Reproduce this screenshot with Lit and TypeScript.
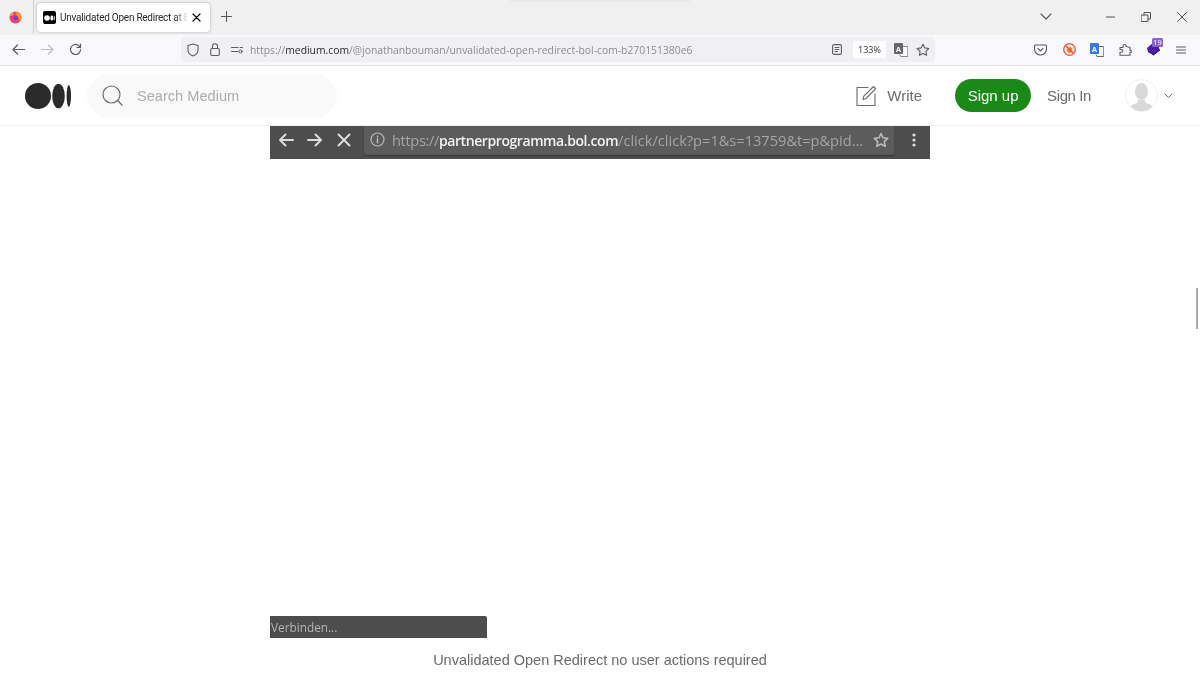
import { LitElement, html, css, svg } from "lit";
import { customElement } from "lit/decorators.js";

const ic = (w: number, h: number, vb: string, body: unknown, cls = "") =>
  html`<svg class="ic ${cls}" width=${w} height=${h} viewBox=${vb} fill="none" stroke="currentColor" stroke-linecap="round" stroke-linejoin="round">${body}</svg>`;

@customElement("app-root")
export class AppRoot extends LitElement {
  static styles = css`
    :host { display: block; width: 1200px; height: 675px; overflow: hidden; position: relative; background: #fff; font-family: "Open Sans", "Noto Sans", sans-serif; filter: blur(.35px); }
    * { box-sizing: border-box; }
    .ic { display: block; flex: none; }
    .tabs { height: 35px; background: #f0f0f0; display: flex; align-items: flex-start; position: relative; }
    .shade { position: absolute; left: 510px; top: 0; width: 180px; height: 3px; background: linear-gradient(#e6e6e6, #f0f0f0); border-radius: 0 0 8px 8px; }
    .fx { width: 34px; height: 34px; padding: 11px 0 0 9px; border-right: 1px solid #d2d2d4; flex: none; }
    .tab { margin: 3px 0 0 3px; width: 173px; height: 29px; background: #fff; border-radius: 4px; box-shadow: 0 0 3px rgba(0,0,0,.28); display: flex; align-items: center; padding: 0 9px 0 6px; gap: 4px; }
    .fav { width: 13px; height: 13px; background: #000; border-radius: 2px; display: flex; align-items: center; justify-content: center; flex: none; }
    .tabtext { font-family: "Roboto", sans-serif; font-size: 10px; letter-spacing: -.25px; color: #2a2a2e; white-space: nowrap; flex: 1; min-width: 0; -webkit-mask-image: linear-gradient(90deg,#000 90%,transparent 100%); mask-image: linear-gradient(90deg,#000 90%,transparent 100%); }
    .plus { margin: 11px 0 0 11px; color: #55555a; }
    .tabs-right { margin-left: auto; display: flex; align-items: center; height: 33px; color: #55555a; }
    .down { margin-right: 54px; }
    .win { margin-right: 26px; }
    .win.last { margin-right: 13px; }
    .nav { height: 31px; background: #f9f9fb; border-bottom: 1px solid #dedee0; display: flex; align-items: center; padding-bottom: 1px; position: relative; color: #5b5b60; }
    .back { margin-left: 12px; }
    .fwd { margin-left: 16px; color: #bdbdc2; }
    .reload { margin-left: 15px; }
    .url { width: 754px; height: 25px; background: #f0f0f4; border-radius: 4px; display: flex; align-items: center; padding-left: 6px; margin-left: 99px; }
    .lock { margin-left: 11px; }
    .tune { margin-left: 11px; }
    .urltext { font-size: 10.35px; color: #8b8b90; margin-left: 7px; white-space: nowrap; flex: 1; }
    .urltext b { font-weight: 400; color: #2a2a2e; }
    .urlr { display: flex; align-items: center; margin-right: 5px; }
    .zoom { width: 33px; height: 17px; background: #fff; border-radius: 3px; font-size: 9px; color: #333; display: flex; align-items: center; justify-content: center; margin: 0 8px 0 11px; }
    .star { margin-left: 8px; }
    .ext { margin-left: auto; display: flex; align-items: center; padding-right: 14px; }
    .e2 { margin-left: 16px; }
    .e3 { margin-left: 14px; }
    .e4 { margin-left: 15px; }
    .e5 { margin-left: 14px; margin-top: -5px; }
    .e6 { margin-left: 13px; }
    .mh { height: 60px; border-bottom: 1px solid #f2f2f2; display: flex; align-items: center; padding: 0 25px; }
    .search { margin-left: 16px; width: 250px; height: 42px; background: #f9f9f9; border-radius: 21px; display: flex; align-items: center; padding-left: 15px; color: #6b6b6b; }
    .search span { margin-left: 14px; font-family: "Liberation Sans", sans-serif; font-size: 14.6px; color: #adadad; }
    .hr { margin-left: auto; display: flex; align-items: center; color: #6b6b6b; font-family: "Liberation Sans", sans-serif; font-size: 15px; }
    .write { margin-left: 10px; }
    .signup { margin-left: 33px; width: 76px; height: 33px; background: #1a8917; color: #fff; border-radius: 17px; display: flex; align-items: center; justify-content: center; }
    .signin { margin-left: 16px; letter-spacing: -.4px; }
    .avatar { margin-left: 34px; width: 33px; height: 33px; border-radius: 50%; overflow: hidden; background: #fff; border: 1px solid #eee; }
    .chev { margin-left: 6px; margin-right: 2px; }
    .content { height: 549px; display: flex; flex-direction: column; align-items: center; }
    .figure { width: 660px; height: 512px; display: flex; flex-direction: column; justify-content: space-between; }
    .shot { height: 33px; background: #4d4d4d; display: flex; align-items: center; padding-bottom: 6px; color: #dcdcdc; }
    .shot .a1 { margin-left: 8px; }
    .shot .a2 { margin-left: 13px; }
    .shot .a3 { margin-left: 14px; }
    .bar { margin-left: 13px; width: 530px; height: 29px; align-self: flex-start; background: #5c5c5c; border-radius: 0 0 3px 3px; display: flex; align-items: center; padding: 0 0 2px 6px; box-shadow: 0 1px 1px rgba(0,0,0,.35); color: #b9b9b9; }
    .shoturl { font-family: "Open Sans", sans-serif; font-size: 14.6px; color: #a5a5a5; margin-left: 7px; white-space: nowrap; flex: 1; }
    .shoturl i { font-style: normal; letter-spacing: -.35px; }
    .shoturl b { font-size: 14px; font-weight: 600; letter-spacing: -.42px; color: #f2f2f2; }
    .gap5 { width: 5px; }
    .dots { margin-left: 18px; color: #e0e0e0; }
    .status { width: 217px; height: 22px; background: #4d4d4d; border-radius: 0 2px 0 0; color: #b5b5b5; font-family: "Open Sans", sans-serif; font-size: 11.8px; line-height: 22px; padding-left: 1px; white-space: nowrap; overflow: hidden; }
    .caption { margin-top: 11px; font-family: "Liberation Sans", sans-serif; font-size: 14.5px; color: #6b6b6b; line-height: 22px; }
    .thumb { position: absolute; left: 1196px; top: 288px; width: 2px; height: 41px; background: #a9a9a9; }
  `;

  render() {
    return html`
      <div class="tabs">
        <div class="shade"></div>
        <div class="fx">
          <svg class="ic" width="13" height="13" viewBox="0 0 13 13"><circle cx="6.5" cy="6.5" r="6" fill="#e6407a"/><path d="M6.5 .5a6 6 0 0 1 6 6c0 2-1 3.6-2.4 4.8C11 9 10 6.5 8 5.5 7.5 4 7 2 6.5.5z" fill="#f59a23"/><circle cx="6.8" cy="7" r="2.2" fill="#8a3fb0"/><path d="M1 5c1-2 2-3 4-4-1 1-1 2-.6 3C3 4.500 2 5 1 5z" fill="#f9b233"/></svg>
        </div>
        <div class="tab">
          <div class="fav"><svg class="ic" width="11" height="6" viewBox="0 0 11 6"><circle cx="3" cy="3" r="2.800" fill="#fff"/><ellipse cx="7.800" cy="3" rx="1.400" ry="2.700" fill="#fff"/><ellipse cx="10.200" cy="3" rx=".5" ry="2.500" fill="#fff"/></svg></div>
          <span class="tabtext">Unvalidated Open Redirect at B</span>
          ${ic(9, 9, "0 0 9 9", svg`<path d="M1 1l7 7M8 1l-7 7" stroke-width="1.200"/>`)}
        </div>
        ${ic(11, 11, "0 0 11 11", svg`<path d="M5.500 .5v10M.5 5.500h10" stroke-width="1.100"/>`, "plus")}
        <div class="tabs-right">
          ${ic(12, 7, "0 0 12 7", svg`<path d="M1 1l5 5 5-5" stroke-width="1.100"/>`, "down")}
          ${ic(9, 2, "0 0 9 2", svg`<path d="M0 1h9" stroke-width="1"/>`, "win")}
          ${ic(10, 10, "0 0 10 10", svg`<path d="M.5 3h6.500v6.500H.5zM3 3V.5h6.500V7H7" stroke-width="1"/>`, "win")}
          ${ic(10, 10, "0 0 10 10", svg`<path d="M.5.5l9 9M9.500.5l-9 9" stroke-width="1"/>`, "win last")}
        </div>
      </div>
      <div class="nav">
        ${ic(13, 11, "0 0 13 11", svg`<path d="M12.500 5.500H1M5.500 1L1 5.500 5.500 10" stroke-width="1.200"/>`, "back")}
        ${ic(13, 11, "0 0 13 11", svg`<path d="M.5 5.500H12M7.500 1L12 5.500 7.500 10" stroke-width="1.200"/>`, "fwd")}
        ${ic(13, 13, "0 0 13 13", svg`<path d="M11.500 6.500a5 5 0 1 1-1.600-3.700L11.500 4.500M11.500 1v3.500H8" stroke-width="1.200"/>`, "reload")}
        <div class="url">
          ${ic(12, 14, "0 0 12 14", svg`<path d="M6 1l5 1.500V7c0 3-2.500 5-5 6-2.500-1-5-3-5-6V2.500z" stroke-width="1.100"/>`)}
          ${ic(10, 13, "0 0 10 13", svg`<rect x=".7" y="5.500" width="8.600" height="7" rx="1.500" stroke-width="1.100"/><path d="M2.500 5.500V3.300a2.500 2.500 0 0 1 5 0v2.200" stroke-width="1.100"/>`, "lock")}
          ${ic(12, 9, "0 0 12 9", svg`<path d="M.5 6.500h6.500M9 2.500h2.500" stroke-width="1"/><circle cx="9.500" cy="6.500" r="1.500" stroke-width="1"/><path d="M.5 2.500H7" stroke-width="1"/>`, "tune")}
          <span class="urltext">https://<b>medium.com</b>/@jonathanbouman/unvalidated-open-redirect-bol-com-b270151380e6</span>
          <div class="urlr">
            ${ic(10, 11, "0 0 10 11", svg`<rect x=".6" y=".6" width="8.800" height="9.800" rx="1.500" stroke-width="1.100"/><path d="M3 3.500h4M3 5.500h4M3 7.500h2.500" stroke-width="1"/>`)}
            <div class="zoom">133%</div>
            <svg class="ic" width="14" height="14" viewBox="0 0 14 14"><path d="M6.500 3.500h6.800a.5.500 0 0 1 .5.500v9.500h-7l-1-2" fill="#f9f9fb" stroke="#77777c" stroke-width=".9"/><rect x="0" y="0" width="9" height="11" rx="1" fill="#66666b"/><text x="1.800" y="8.500" font-size="7.500" font-weight="700" fill="#fff" font-family="Liberation Sans">A</text></svg>
            ${ic(14, 14, "0 0 14 14", svg`<path d="M7 1.200l1.800 3.700 4 .6-2.900 2.800.7 4L7 10.400l-3.600 1.900.7-4L1.200 5.500l4-.6z" stroke-width="1.100"/>`, "star")}
          </div>
        </div>
        <div class="ext">
          ${ic(13, 12, "0 0 13 12", svg`<path d="M1.800 1h9.400A1.300 1.300 0 0 1 12.500 2.300V5a6 6 0 0 1-12 0V2.300A1.300 1.300 0 0 1 1.800 1z" stroke-width="1.100"/><path d="M4 4.500L6.500 7 9 4.500" stroke-width="1.100"/>`)}
          <svg class="ic e2" width="13" height="13" viewBox="0 0 13 13"><circle cx="6.500" cy="6.500" r="5.800" fill="#fbe3df" stroke="#e8524a" stroke-width="1.300"/><path d="M3.500 7l3-3.500 3 2-1 4-3 .5z" fill="#d98a2b"/><path d="M2.500 2.500l8 8" stroke="#e8524a" stroke-width="1.200"/></svg>
          <svg class="ic e3" width="14" height="14" viewBox="0 0 14 14"><path d="M7 3.500h6.300a.5.500 0 0 1 .5.500v9.500H7l-1-2" fill="#f9f9fb" stroke="#5b5b60" stroke-width=".9"/><rect x="0" y="0" width="9" height="11" rx="1" fill="#3b7ad9"/><text x="1.800" y="8.500" font-size="7.500" font-weight="700" fill="#fff" font-family="Liberation Sans">A</text></svg>
          ${ic(13, 13, "0 0 13 13", svg`<path d="M1 4.500h3V3a1.500 1.500 0 0 1 3 0l.5.500 3.500 1v3h1.200v2H11v2.700H1v-3h1.500a1.300 1.300 0 0 0 0-2.700H1z" stroke-width="1.100"/>`, "e4")}
          <svg class="ic e5" width="17" height="19" viewBox="0 0 17 19"><path d="M1 10l6-5 6 2v3l1 2-6.500 5L2 14z" fill="#4a1fa8"/><path d="M2 13l5.500 4 6.500-5" stroke="#2d1180" fill="none"/><rect x="6" y="0" width="11" height="9" rx="1.500" fill="#8a63c9"/><text x="7.300" y="7.300" font-size="7.500" fill="#fff" font-family="Open Sans">19</text></svg>
          ${ic(10, 8, "0 0 10 8", svg`<path d="M.5 1h9M.5 4h9M.5 7h9" stroke-width="1.100"/>`, "e6")}
        </div>
      </div>
      <div class="mh">
        <svg class="ic" width="46" height="26" viewBox="0 0 46 26"><ellipse cx="13" cy="13" rx="13" ry="13" fill="#2a2a2a"/><ellipse cx="33.500" cy="13" rx="6.300" ry="12.300" fill="#2a2a2a"/><ellipse cx="43.800" cy="13" rx="2.200" ry="11" fill="#2a2a2a"/></svg>
        <div class="search">
          ${ic(21, 21, "0 0 21 21", svg`<circle cx="9.500" cy="9.500" r="8.500" stroke-width="1.200"/><path d="M15.500 15.500l4.500 4.500" stroke-width="1.200"/>`)}
          <span>Search Medium</span>
        </div>
        <div class="hr">
          ${ic(21, 21, "0 0 21 21", svg`<path d="M12 2.500H1v18h18V9" stroke-width="1.100"/><path d="M7 14.500l.8-3.300L17.500 1.500l2.200 2.200-9.700 9.800z" stroke-width="1.100"/>`)}
          <span class="write">Write</span>
          <div class="signup">Sign up</div>
          <span class="signin">Sign In</span>
          <div class="avatar">
            <svg class="ic" width="31" height="31" viewBox="0 0 31 31"><ellipse cx="15.500" cy="11.500" rx="6.500" ry="8.500" fill="#d8d8d8"/><path d="M2 31c1-5 5-7 9-8 1-1 1-2 1-3h7c0 1 0 2 1 3 4 1 8 3 9 8z" fill="#d8d8d8"/></svg>
          </div>
          ${ic(9, 6, "0 0 9 6", svg`<path d="M1 1l3.500 3.500L8 1" stroke-width="1"/>`, "chev")}
        </div>
      </div>
      <div class="content">
        <div class="figure">
          <div class="shot">
            ${ic(16, 14, "0 0 16 14", svg`<path d="M15 7H2M7.500 1.500L2 7l5.500 5.500" stroke-width="2"/>`, "a1")}
            ${ic(16, 14, "0 0 16 14", svg`<path d="M1 7h13M8.500 1.500L14 7l-5.500 5.500" stroke-width="2"/>`, "a2")}
            ${ic(14, 14, "0 0 14 14", svg`<path d="M1.500 1.500l11 11M12.500 1.500l-11 11" stroke-width="2"/>`, "a3")}
            <div class="bar">
              ${ic(15, 15, "0 0 15 15", svg`<circle cx="7.500" cy="7.500" r="6.500" stroke-width="1.200"/><path d="M7.500 6.800v4M7.500 4.200v.5" stroke-width="1.500"/>`)}
              <span class="shoturl"><i>https://</i><b>partnerprogramma.bol.com</b>/click/click?p=1&amp;s=13759&amp;t=p&amp;pid...</span>
              ${ic(16, 16, "0 0 16 16", svg`<path d="M8 1.500l2 4.300 4.700.6-3.400 3.200.9 4.700L8 12l-4.200 2.300.9-4.700L1.300 6.400 6 5.800z" stroke-width="1.600"/>`)}
              <span class="gap5"></span>
            </div>
            <svg class="ic dots" width="4" height="14" viewBox="0 0 4 14"><circle cx="2" cy="2" r="1.600" fill="currentColor"/><circle cx="2" cy="7" r="1.600" fill="currentColor"/><circle cx="2" cy="12" r="1.600" fill="currentColor"/></svg>
          </div>
          <div class="status">Verbinden...</div>
        </div>
        <div class="caption">Unvalidated Open Redirect no user actions required</div>
      </div>
      <div class="thumb"></div>
    `;
  }
}
